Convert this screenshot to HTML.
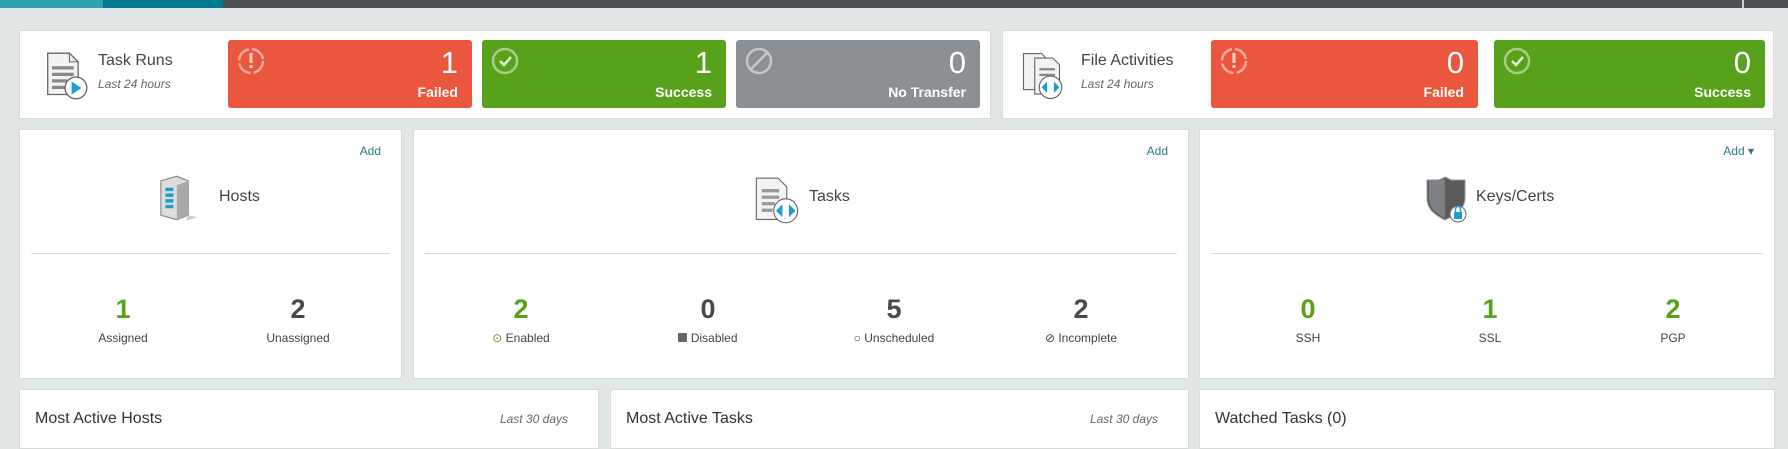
<!DOCTYPE html>
<html><head><style>
*{box-sizing:border-box;margin:0;padding:0}
body{width:1788px;height:424px;overflow:hidden;background:#e1e6e6;font-family:"Liberation Sans",sans-serif;color:#444;position:relative}
.abs{position:absolute}
.panel{position:absolute;background:#fff;border:1px solid #d6dcdc}
.box{position:absolute;border-radius:3px;color:#fff}
.box .n{position:absolute;right:14px;top:5px;font-size:31px;font-weight:300}
.box .l{position:absolute;right:14px;bottom:8px;font-size:14px;font-weight:bold}
.box svg{position:absolute;left:8px;top:6px}
.ttl{font-size:16px;color:#444}
.sub{font-size:12px;font-style:italic;color:#666}
.add{position:absolute;font-size:12px;color:#2b7a8a}
.hr{position:absolute;height:1px;background:#d4dcdc}
.stat{position:absolute;text-align:center;width:160px}
.stat .v{font-size:27px;line-height:30px;font-weight:bold}
.stat .t{font-size:12px;margin-top:7px;color:#444}
.g{color:#58a11b}.d{color:#4a4a4a}
.h3{position:absolute;font-size:16px;color:#333;top:20px;left:15px}
.l30{position:absolute;font-size:12px;font-style:italic;color:#666;top:22px}
</style></head><body>
<div class="abs" style="left:0;top:0;width:1788px;height:8px;background:#4d4f52"></div>
<div class="abs" style="left:0;top:0;width:223px;height:8px;background:#007a8e"></div>
<div class="abs" style="left:0;top:0;width:103px;height:8px;background:#2ea2ac"></div>
<div class="abs" style="left:1742px;top:0;width:2px;height:8px;background:#ccc"></div>

<div class="panel" style="left:19px;top:30px;width:972px;height:89px">
  <svg class="abs" style="left:19px;top:20px" width="50" height="50" viewBox="0 0 46 46">
    <path d="M8 2h20l8 8v30H8z" fill="#f3f3f3" stroke="#666" stroke-width="1.2"/>
    <path d="M28 2v8h8" fill="none" stroke="#666"/>
    <g fill="#888"><rect x="12" y="14" width="20" height="3"/><rect x="12" y="20" width="20" height="3"/><rect x="12" y="26" width="14" height="3"/><rect x="12" y="32" width="12" height="3"/></g>
    <circle cx="34" cy="34" r="10" fill="#fff" stroke="#666" stroke-width="1.2"/>
    <path d="M30 28l9 6-9 6z" fill="#1a9fd0"/>
  </svg>
  <div class="abs ttl" style="left:78px;top:21px">Task Runs</div>
  <div class="abs sub" style="left:78px;top:46px">Last 24 hours</div>
</div>
<div class="box" style="left:228px;top:40px;width:244px;height:68px;background:#ea573e">
  <svg width="30" height="30"><circle cx="15" cy="15" r="12" fill="none" stroke="#f5ab9e" stroke-width="2.5" stroke-dasharray="16 3"/><rect x="13.5" y="7" width="3" height="10" fill="#f7d0c8"/><rect x="13.5" y="19" width="3" height="3" fill="#f7d0c8"/></svg>
  <div class="n">1</div><div class="l">Failed</div></div>
<div class="box" style="left:482px;top:40px;width:244px;height:68px;background:#58a11b">
  <svg width="30" height="30"><circle cx="15" cy="15" r="12" fill="none" stroke="#a8cf88" stroke-width="2.5"/><path d="M10 15l4 4 7-8" fill="none" stroke="#e0f0d0" stroke-width="2.5"/></svg>
  <div class="n">1</div><div class="l">Success</div></div>
<div class="box" style="left:736px;top:40px;width:244px;height:68px;background:#8a9094">
  <svg width="30" height="30"><circle cx="15" cy="15" r="12" fill="none" stroke="#c3c7c9" stroke-width="2.5"/><path d="M7 23L23 7" stroke="#c3c7c9" stroke-width="2.5"/></svg>
  <div class="n">0</div><div class="l">No Transfer</div></div>

<div class="panel" style="left:1002px;top:30px;width:772px;height:89px">
  <svg class="abs" style="left:16px;top:18px" width="54" height="54" viewBox="0 0 48 48">
    <path d="M4 4h16l6 6v26H4z" fill="#f3f3f3" stroke="#666"/>
    <path d="M14 8h16l6 6v26H14z" fill="#f3f3f3" stroke="#666"/>
    <g fill="#888"><rect x="18" y="17" width="14" height="2"/><rect x="18" y="22" width="14" height="2"/></g>
    <circle cx="28" cy="34" r="10" fill="#fff" stroke="#666"/>
    <path d="M20 34l5-5v10zM36 34l-5-5v10z" fill="#1a9fd0"/>
  </svg>
  <div class="abs ttl" style="left:78px;top:21px">File Activities</div>
  <div class="abs sub" style="left:78px;top:46px">Last 24 hours</div>
</div>
<div class="box" style="left:1211px;top:40px;width:267px;height:68px;background:#ea573e">
  <svg width="30" height="30"><circle cx="15" cy="15" r="12" fill="none" stroke="#f5ab9e" stroke-width="2.5" stroke-dasharray="16 3"/><rect x="13.5" y="7" width="3" height="10" fill="#f7d0c8"/><rect x="13.5" y="19" width="3" height="3" fill="#f7d0c8"/></svg>
  <div class="n">0</div><div class="l">Failed</div></div>
<div class="box" style="left:1494px;top:40px;width:271px;height:68px;background:#58a11b">
  <svg width="30" height="30"><circle cx="15" cy="15" r="12" fill="none" stroke="#a8cf88" stroke-width="2.5"/><path d="M10 15l4 4 7-8" fill="none" stroke="#e0f0d0" stroke-width="2.5"/></svg>
  <div class="n">0</div><div class="l">Success</div></div>

<div class="panel" style="left:19px;top:129px;width:383px;height:250px">
  <div class="add" style="right:20px;top:14px">Add</div>
  <svg class="abs" style="left:134px;top:44px" width="48" height="48" viewBox="0 0 42 42">
    <path d="M6 6l14-4 10 4v30l-10 4-14-4z" fill="#ddd" stroke="#888"/>
    <path d="M20 10v30l10-4V6z" fill="#aaa"/>
    <g fill="#1a9fd0"><rect x="10" y="12" width="7" height="3"/><rect x="10" y="17" width="7" height="3"/><rect x="10" y="22" width="7" height="3"/><rect x="10" y="27" width="7" height="3"/></g>
    <path d="M30 36l8 2-10 3z" fill="#ccc"/>
  </svg>
  <div class="abs ttl" style="left:199px;top:58px">Hosts</div>
  <div class="hr" style="left:11px;right:11px;top:123px"></div>
  <div class="stat" style="left:23px;top:164px"><div class="v g">1</div><div class="t">Assigned</div></div>
  <div class="stat" style="left:198px;top:164px"><div class="v d">2</div><div class="t">Unassigned</div></div>
</div>

<div class="panel" style="left:413px;top:129px;width:776px;height:250px">
  <div class="add" style="right:20px;top:14px">Add</div>
  <svg class="abs" style="left:338px;top:46px" width="50" height="50" viewBox="0 0 46 46">
    <path d="M4 2h20l8 8v30H4z" fill="#f3f3f3" stroke="#666"/>
    <g fill="#999"><rect x="9" y="12" width="16" height="3"/><rect x="9" y="18" width="16" height="3"/><rect x="9" y="24" width="12" height="3"/><rect x="9" y="30" width="10" height="3"/></g>
    <circle cx="31" cy="32" r="11" fill="#fff" stroke="#666"/>
    <path d="M22 32l6-6v12zM40 32l-6-6v12z" fill="#1a9fd0"/>
  </svg>
  <div class="abs ttl" style="left:395px;top:58px">Tasks</div>
  <div class="hr" style="left:11px;right:11px;top:123px"></div>
  <div class="stat" style="left:27px;top:164px"><div class="v g">2</div><div class="t"><span style="color:#58a11b">⊙</span> Enabled</div></div>
  <div class="stat" style="left:214px;top:164px"><div class="v d">0</div><div class="t"><span style="display:inline-block;width:9px;height:9px;background:#666;border-radius:1px"></span> Disabled</div></div>
  <div class="stat" style="left:400px;top:164px"><div class="v d">5</div><div class="t">○ Unscheduled</div></div>
  <div class="stat" style="left:587px;top:164px"><div class="v d">2</div><div class="t">⊘ Incomplete</div></div>
</div>

<div class="panel" style="left:1199px;top:129px;width:576px;height:250px">
  <div class="add" style="right:20px;top:14px">Add ▾</div>
  <svg class="abs" style="left:224px;top:46px" width="44" height="48" viewBox="0 0 44 48">
    <path d="M18 1l6 3 14 0v18c0 10-8 16-20 22C6 38 0 32 0 22V4h12z" transform="translate(3 0)" fill="#5a5a5a" stroke="#999"/>
    <path d="M21 3L5 5v17c0 9 6 15 16 20z" fill="#7c8085"/>
    <circle cx="34" cy="38" r="8" fill="#fff" stroke="#666"/>
    <rect x="30" y="36" width="8" height="7" fill="#1a9fd0"/>
    <path d="M31.5 36v-3a2.5 2.5 0 015 0v3" fill="none" stroke="#1a9fd0" stroke-width="1.5"/>
  </svg>
  <div class="abs ttl" style="left:276px;top:58px">Keys/Certs</div>
  <div class="hr" style="left:11px;right:11px;top:123px"></div>
  <div class="stat" style="left:28px;top:164px"><div class="v g">0</div><div class="t">SSH</div></div>
  <div class="stat" style="left:210px;top:164px"><div class="v g">1</div><div class="t">SSL</div></div>
  <div class="stat" style="left:393px;top:164px"><div class="v g">2</div><div class="t">PGP</div></div>
</div>

<div class="panel" style="left:19px;top:389px;width:580px;height:60px"><div class="h3">Most Active Hosts</div><div class="l30" style="right:30px">Last 30 days</div></div>
<div class="panel" style="left:610px;top:389px;width:579px;height:60px"><div class="h3">Most Active Tasks</div><div class="l30" style="right:30px">Last 30 days</div></div>
<div class="panel" style="left:1199px;top:389px;width:576px;height:60px"><div class="h3">Watched Tasks (0)</div></div>
</body></html>
